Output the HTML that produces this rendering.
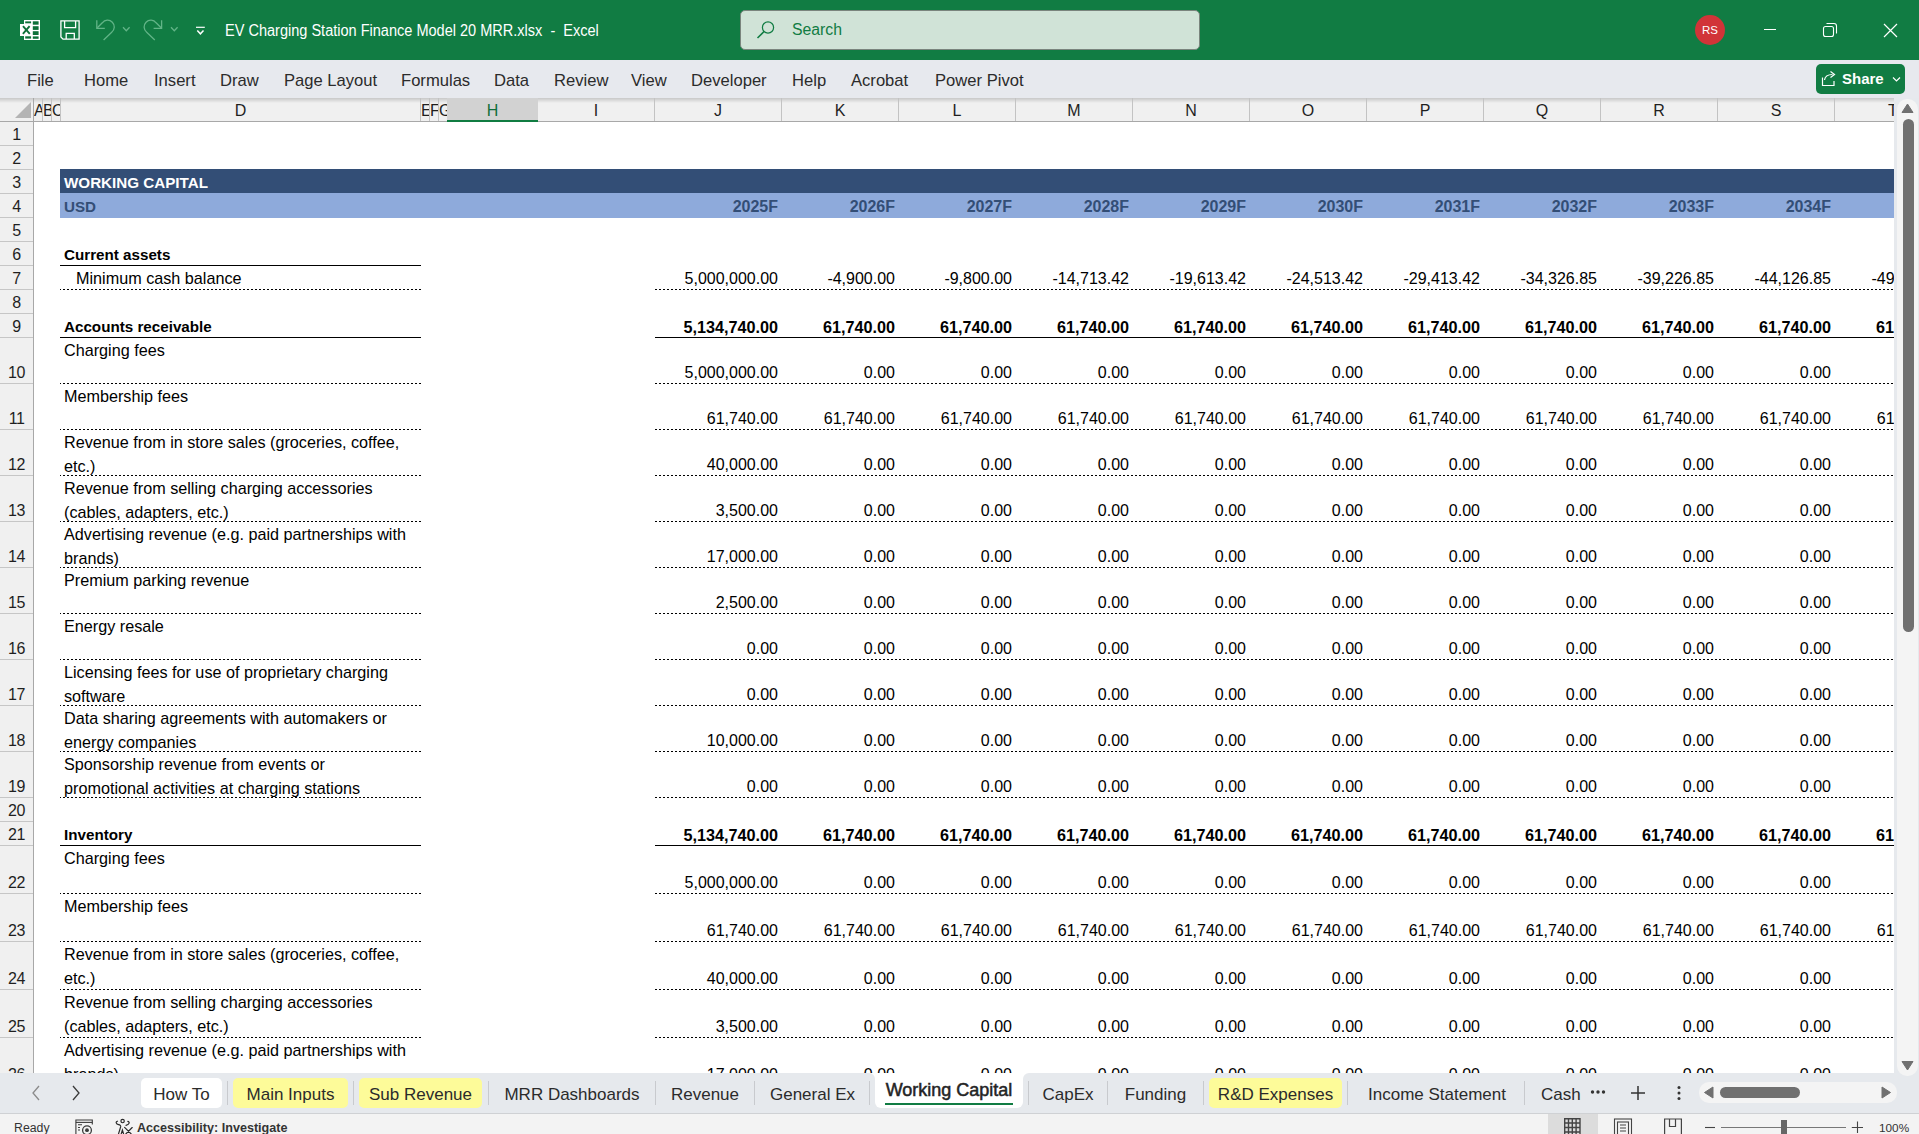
<!DOCTYPE html><html><head><meta charset="utf-8"><style>
*{margin:0;padding:0;box-sizing:border-box}
html,body{width:1919px;height:1134px;overflow:hidden;background:#fff;font-family:"Liberation Sans", sans-serif}
.a{position:absolute}
.t{position:absolute;white-space:nowrap;line-height:24px;height:24px}
.lab{font-size:16.2px;color:#000}
.labb{font-size:15.2px;font-weight:bold;color:#000}
.num{font-size:16px;color:#000;text-align:right}
.numb{font-size:16.2px;font-weight:bold;color:#000;text-align:right}
.dot{position:absolute;height:1px;background-image:linear-gradient(to right,#000 0,#000 2px,transparent 2px,transparent 4px);background-size:4px 1px}
.sol{position:absolute;height:1px;background:#000}
.rib{position:absolute;top:69px;line-height:24px;font-size:16.6px;color:#2b2b2b;white-space:nowrap}
.ch{position:absolute;top:99px;height:22px;line-height:23px;text-align:center;font-size:16px;color:#1f1f1f}
.rn{position:absolute;left:0;width:33px;text-align:center;font-size:16px;letter-spacing:-0.5px;color:#1f1f1f;line-height:20px}
.sep{position:absolute;width:1px;background:#c3c3c3}
.tab{position:absolute;top:1078px;height:30px;line-height:33px;font-size:17px;color:#2b2b2b;white-space:nowrap;border-radius:5px}
.tsep{position:absolute;top:1081px;width:1px;height:24px;background:#c8cace}
</style></head><body>
<div class="a" style="left:0;top:0;width:1919px;height:60px;background:#117C43"></div>
<svg class="a" style="left:14px;top:14px" width="32" height="32" viewBox="14 14 32 32">
<rect x="24" y="20" width="16" height="20" fill="#fff"/>
<g fill="#0d7038">
<rect x="25.2" y="21.4" width="5.9" height="1.9"/>
<rect x="32.8" y="21.3" width="5.8" height="3.4"/>
<rect x="32.8" y="26.2" width="5.8" height="3.7"/>
<rect x="32.8" y="31.2" width="5.8" height="3.8"/>
<rect x="32.8" y="36.4" width="5.8" height="2.4"/>
<rect x="25.2" y="36.3" width="5.9" height="2.3"/>
</g>
<rect x="20" y="24" width="11.5" height="12" fill="#fff"/>
<path d="M23 26.1 L29.8 33.8 M29.6 26.1 L22.9 33.8" stroke="#0d7038" stroke-width="1.9"/>
</svg>
<svg class="a" style="left:50px;top:10px" width="170" height="40" viewBox="50 10 170 40">
<path d="M60.9 20.9 H79.1 V39.1 H63 L60.9 37 Z" fill="none" stroke="#fff" stroke-width="1.3"/>
<path d="M64.6 20.9 V27.6 H75.6 V20.9" fill="none" stroke="#fff" stroke-width="1.3"/>
<path d="M66.2 39.1 V33.3 H74.3 V39.1" fill="none" stroke="#fff" stroke-width="1.3"/>
<g fill="none" stroke="#62b487" stroke-width="1.3">
<path d="M96.8 20.2 V28.3 H104.8"/>
<path d="M97.3 27.8 L102.3 22.8 A6.7 6.7 0 1 1 111.7 32.2 L103.6 40"/>
<path d="M123 27.3 L126.3 30.8 L129.6 27.3"/>
<path d="M161.6 20.2 V28.3 H153.6"/>
<path d="M161.1 27.8 L156.1 22.8 A6.7 6.7 0 1 0 146.7 32.2 L154.8 40"/>
<path d="M171 27.3 L174.3 30.8 L177.6 27.3"/>
</g>
<path d="M196 27.3 H204.8" stroke="#fff" stroke-width="1.2"/>
<path d="M197.3 30.6 L200.4 33.8 L203.5 30.6" fill="none" stroke="#fff" stroke-width="1.5"/>
</svg>
<div class="a" style="left:225px;top:20px;line-height:22px;font-size:16px;color:#fff;white-space:pre;transform:scaleX(0.908);transform-origin:0 0">EV Charging Station Finance Model 20 MRR.xlsx  -  Excel</div>
<div class="a" style="left:740px;top:10px;width:460px;height:40px;background:#d0e3d7;border:1px solid #7a857e;border-radius:5px"></div>
<svg class="a" style="left:756px;top:20px" width="20" height="20" viewBox="0 0 20 20">
<circle cx="12" cy="7.5" r="5.6" fill="none" stroke="#117C43" stroke-width="1.25"/>
<line x1="8" y1="11.5" x2="1.5" y2="18" stroke="#117C43" stroke-width="1.6"/>
</svg>
<div class="a" style="left:792px;top:18px;line-height:24px;font-size:15.8px;color:#117C43">Search</div>
<div class="a" style="left:1695px;top:15px;width:30px;height:30px;border-radius:15px;background:#d13438;color:#fff;font-size:11.5px;line-height:30px;text-align:center">RS</div>
<div class="a" style="left:1764px;top:29px;width:12px;height:1px;background:#fff"></div>
<svg class="a" style="left:1822px;top:22px" width="16" height="16" viewBox="0 0 16 16">
<rect x="1.5" y="4.5" width="10" height="10" rx="2" fill="none" stroke="#fff" stroke-width="1.1"/>
<path d="M4.5 1.5 H12 Q14.5 1.5 14.5 4 V11.5" fill="none" stroke="#fff" stroke-width="1.1"/>
</svg>
<svg class="a" style="left:1883px;top:23px" width="15" height="15" viewBox="0 0 15 15">
<path d="M1 1 L14 14 M14 1 L1 14" stroke="#fff" stroke-width="1.2"/>
</svg>
<div class="a" style="left:0;top:60px;width:1919px;height:38px;background:#e7e9ee"></div>
<div class="rib" style="left:27px">File</div>
<div class="rib" style="left:84px">Home</div>
<div class="rib" style="left:154px">Insert</div>
<div class="rib" style="left:220px">Draw</div>
<div class="rib" style="left:284px">Page Layout</div>
<div class="rib" style="left:401px">Formulas</div>
<div class="rib" style="left:494px">Data</div>
<div class="rib" style="left:554px">Review</div>
<div class="rib" style="left:631px">View</div>
<div class="rib" style="left:691px">Developer</div>
<div class="rib" style="left:792px">Help</div>
<div class="rib" style="left:851px">Acrobat</div>
<div class="rib" style="left:935px">Power Pivot</div>
<div class="a" style="left:1816px;top:64px;width:89px;height:30px;background:#117C43;border-radius:5px"></div>
<svg class="a" style="left:1821px;top:70px" width="16" height="17" viewBox="0 0 16 17">
<path d="M1.5 7.5 V15.5 H13 V11" fill="none" stroke="#fff" stroke-width="1.2"/>
<path d="M3.5 10 C4 6 7 4.5 11.5 4.5" fill="none" stroke="#fff" stroke-width="1.2"/>
<path d="M9.5 1.5 L13.5 4.5 L9.5 7.5" fill="none" stroke="#fff" stroke-width="1.2"/>
</svg>
<div class="a" style="left:1842px;top:67px;line-height:24px;font-size:15px;font-weight:bold;color:#fff">Share</div>
<svg class="a" style="left:1892px;top:76px" width="9" height="7" viewBox="0 0 9 7">
<path d="M1 1.5 L4.5 5 L8 1.5" fill="none" stroke="#fff" stroke-width="1.2"/>
</svg>
<div class="a" style="left:0;top:98px;width:1894px;height:24px;background:#f0f0f0"></div>
<div class="a" style="left:0;top:98px;width:1894px;height:5px;background:linear-gradient(#c8c8c8,#f0f0f0)"></div>
<svg class="a" style="left:14px;top:102px" width="17" height="17" viewBox="0 0 17 17"><path d="M17 0 V16 H1 Z" fill="#b4b4b4"/></svg>
<div class="sep" style="left:33px;top:98px;height:23px"></div>
<div class="sep" style="left:42px;top:98px;height:23px"></div>
<div class="sep" style="left:51px;top:98px;height:23px"></div>
<div class="sep" style="left:60px;top:98px;height:23px"></div>
<div class="sep" style="left:420px;top:98px;height:23px"></div>
<div class="sep" style="left:429px;top:98px;height:23px"></div>
<div class="sep" style="left:438px;top:98px;height:23px"></div>
<div class="sep" style="left:447px;top:98px;height:23px"></div>
<div class="sep" style="left:537px;top:98px;height:23px"></div>
<div class="sep" style="left:654px;top:98px;height:23px"></div>
<div class="sep" style="left:781px;top:98px;height:23px"></div>
<div class="sep" style="left:898px;top:98px;height:23px"></div>
<div class="sep" style="left:1015px;top:98px;height:23px"></div>
<div class="sep" style="left:1132px;top:98px;height:23px"></div>
<div class="sep" style="left:1249px;top:98px;height:23px"></div>
<div class="sep" style="left:1366px;top:98px;height:23px"></div>
<div class="sep" style="left:1483px;top:98px;height:23px"></div>
<div class="sep" style="left:1600px;top:98px;height:23px"></div>
<div class="sep" style="left:1717px;top:98px;height:23px"></div>
<div class="sep" style="left:1834px;top:98px;height:23px"></div>
<div class="a" style="left:33px;top:98px;width:1px;height:975px;background:#a8a8a8"></div>
<div class="a" style="left:0;top:121px;width:1894px;height:1px;background:#a8a8a8"></div>
<div class="a" style="left:447px;top:98px;width:91px;height:22px;background:#d2d2d2"></div>
<div class="a" style="left:447px;top:120px;width:91px;height:2px;background:#107c41"></div>
<div class="ch" style="left:34px;width:8px;text-align:left;overflow:hidden;color:#1f1f1f"><span style="position:relative;left:0px">A</span></div>
<div class="ch" style="left:43px;width:8px;text-align:left;overflow:hidden;color:#1f1f1f"><span style="position:relative;left:0px">B</span></div>
<div class="ch" style="left:52px;width:8px;text-align:left;overflow:hidden;color:#1f1f1f"><span style="position:relative;left:0px">C</span></div>
<div class="ch" style="left:61px;width:359px;color:#1f1f1f">D</div>
<div class="ch" style="left:421px;width:8px;text-align:left;overflow:hidden;color:#1f1f1f"><span style="position:relative;left:0px">E</span></div>
<div class="ch" style="left:430px;width:8px;text-align:left;overflow:hidden;color:#1f1f1f"><span style="position:relative;left:0px">F</span></div>
<div class="ch" style="left:439px;width:8px;text-align:left;overflow:hidden;color:#1f1f1f"><span style="position:relative;left:0px">G</span></div>
<div class="ch" style="left:448px;width:89px;color:#0e6e3a">H</div>
<div class="ch" style="left:538px;width:116px;color:#1f1f1f">I</div>
<div class="ch" style="left:655px;width:126px;color:#1f1f1f">J</div>
<div class="ch" style="left:782px;width:116px;color:#1f1f1f">K</div>
<div class="ch" style="left:899px;width:116px;color:#1f1f1f">L</div>
<div class="ch" style="left:1016px;width:116px;color:#1f1f1f">M</div>
<div class="ch" style="left:1133px;width:116px;color:#1f1f1f">N</div>
<div class="ch" style="left:1250px;width:116px;color:#1f1f1f">O</div>
<div class="ch" style="left:1367px;width:116px;color:#1f1f1f">P</div>
<div class="ch" style="left:1484px;width:116px;color:#1f1f1f">Q</div>
<div class="ch" style="left:1601px;width:116px;color:#1f1f1f">R</div>
<div class="ch" style="left:1718px;width:116px;color:#1f1f1f">S</div>
<div class="ch" style="left:1835px;width:116px;color:#1f1f1f">T</div>
<div class="a" style="left:0;top:122px;width:33px;height:951px;background:#f0f0f0"></div>
<div class="a" style="left:0;top:145px;width:33px;height:1px;background:#c6c6c6"></div>
<div class="rn" style="top:125px">1</div>
<div class="a" style="left:0;top:169px;width:33px;height:1px;background:#c6c6c6"></div>
<div class="rn" style="top:149px">2</div>
<div class="a" style="left:0;top:193px;width:33px;height:1px;background:#c6c6c6"></div>
<div class="rn" style="top:173px">3</div>
<div class="a" style="left:0;top:217px;width:33px;height:1px;background:#c6c6c6"></div>
<div class="rn" style="top:197px">4</div>
<div class="a" style="left:0;top:241px;width:33px;height:1px;background:#c6c6c6"></div>
<div class="rn" style="top:221px">5</div>
<div class="a" style="left:0;top:265px;width:33px;height:1px;background:#c6c6c6"></div>
<div class="rn" style="top:245px">6</div>
<div class="a" style="left:0;top:289px;width:33px;height:1px;background:#c6c6c6"></div>
<div class="rn" style="top:269px">7</div>
<div class="a" style="left:0;top:313px;width:33px;height:1px;background:#c6c6c6"></div>
<div class="rn" style="top:293px">8</div>
<div class="a" style="left:0;top:337px;width:33px;height:1px;background:#c6c6c6"></div>
<div class="rn" style="top:317px">9</div>
<div class="a" style="left:0;top:383px;width:33px;height:1px;background:#c6c6c6"></div>
<div class="rn" style="top:363px">10</div>
<div class="a" style="left:0;top:429px;width:33px;height:1px;background:#c6c6c6"></div>
<div class="rn" style="top:409px">11</div>
<div class="a" style="left:0;top:475px;width:33px;height:1px;background:#c6c6c6"></div>
<div class="rn" style="top:455px">12</div>
<div class="a" style="left:0;top:521px;width:33px;height:1px;background:#c6c6c6"></div>
<div class="rn" style="top:501px">13</div>
<div class="a" style="left:0;top:567px;width:33px;height:1px;background:#c6c6c6"></div>
<div class="rn" style="top:547px">14</div>
<div class="a" style="left:0;top:613px;width:33px;height:1px;background:#c6c6c6"></div>
<div class="rn" style="top:593px">15</div>
<div class="a" style="left:0;top:659px;width:33px;height:1px;background:#c6c6c6"></div>
<div class="rn" style="top:639px">16</div>
<div class="a" style="left:0;top:705px;width:33px;height:1px;background:#c6c6c6"></div>
<div class="rn" style="top:685px">17</div>
<div class="a" style="left:0;top:751px;width:33px;height:1px;background:#c6c6c6"></div>
<div class="rn" style="top:731px">18</div>
<div class="a" style="left:0;top:797px;width:33px;height:1px;background:#c6c6c6"></div>
<div class="rn" style="top:777px">19</div>
<div class="a" style="left:0;top:821px;width:33px;height:1px;background:#c6c6c6"></div>
<div class="rn" style="top:801px">20</div>
<div class="a" style="left:0;top:845px;width:33px;height:1px;background:#c6c6c6"></div>
<div class="rn" style="top:825px">21</div>
<div class="a" style="left:0;top:893px;width:33px;height:1px;background:#c6c6c6"></div>
<div class="rn" style="top:873px">22</div>
<div class="a" style="left:0;top:941px;width:33px;height:1px;background:#c6c6c6"></div>
<div class="rn" style="top:921px">23</div>
<div class="a" style="left:0;top:989px;width:33px;height:1px;background:#c6c6c6"></div>
<div class="rn" style="top:969px">24</div>
<div class="a" style="left:0;top:1037px;width:33px;height:1px;background:#c6c6c6"></div>
<div class="rn" style="top:1017px">25</div>
<div class="rn" style="top:1065px">26</div>
<div class="a" style="left:34px;top:122px;width:1860px;height:951px;overflow:hidden">
<div class="a" style="left:26px;top:47px;width:1834px;height:24px;background:#334e76"></div>
<div class="a" style="left:26px;top:71px;width:1834px;height:25px;background:#8eaadb"></div>
<div class="t labb" style="left:30px;top:49px;color:#fff">WORKING CAPITAL</div>
<div class="t labb" style="left:30px;top:73px;color:#334e76">USD</div>
<div class="t numb" style="left:621px;width:123px;top:73px;color:#334e76;font-size:16px">2025F</div>
<div class="t numb" style="left:748px;width:113px;top:73px;color:#334e76;font-size:16px">2026F</div>
<div class="t numb" style="left:865px;width:113px;top:73px;color:#334e76;font-size:16px">2027F</div>
<div class="t numb" style="left:982px;width:113px;top:73px;color:#334e76;font-size:16px">2028F</div>
<div class="t numb" style="left:1099px;width:113px;top:73px;color:#334e76;font-size:16px">2029F</div>
<div class="t numb" style="left:1216px;width:113px;top:73px;color:#334e76;font-size:16px">2030F</div>
<div class="t numb" style="left:1333px;width:113px;top:73px;color:#334e76;font-size:16px">2031F</div>
<div class="t numb" style="left:1450px;width:113px;top:73px;color:#334e76;font-size:16px">2032F</div>
<div class="t numb" style="left:1567px;width:113px;top:73px;color:#334e76;font-size:16px">2033F</div>
<div class="t numb" style="left:1684px;width:113px;top:73px;color:#334e76;font-size:16px">2034F</div>
<div class="t numb" style="left:1801px;width:113px;top:73px;color:#334e76;font-size:16px">2035F</div>
<div class="t labb" style="left:30px;top:121px">Current assets</div>
<div class="sol" style="left:26px;top:143px;width:361px;background-position:3px 0"></div>
<div class="t lab" style="left:42px;top:144px">Minimum cash balance</div>
<div class="t num" style="left:621px;width:123px;top:145px">5,000,000.00</div>
<div class="t num" style="left:748px;width:113px;top:145px">-4,900.00</div>
<div class="t num" style="left:865px;width:113px;top:145px">-9,800.00</div>
<div class="t num" style="left:982px;width:113px;top:145px">-14,713.42</div>
<div class="t num" style="left:1099px;width:113px;top:145px">-19,613.42</div>
<div class="t num" style="left:1216px;width:113px;top:145px">-24,513.42</div>
<div class="t num" style="left:1333px;width:113px;top:145px">-29,413.42</div>
<div class="t num" style="left:1450px;width:113px;top:145px">-34,326.85</div>
<div class="t num" style="left:1567px;width:113px;top:145px">-39,226.85</div>
<div class="t num" style="left:1684px;width:113px;top:145px">-44,126.85</div>
<div class="t num" style="left:1801px;width:113px;top:145px">-49,026.85</div>
<div class="dot" style="left:26px;top:167px;width:361px;background-position:3px 0"></div>
<div class="dot" style="left:621px;top:167px;width:1239px"></div>
<div class="t labb" style="left:30px;top:193px">Accounts receivable</div>
<div class="t numb" style="left:621px;width:123px;top:193px">5,134,740.00</div>
<div class="t numb" style="left:748px;width:113px;top:193px">61,740.00</div>
<div class="t numb" style="left:865px;width:113px;top:193px">61,740.00</div>
<div class="t numb" style="left:982px;width:113px;top:193px">61,740.00</div>
<div class="t numb" style="left:1099px;width:113px;top:193px">61,740.00</div>
<div class="t numb" style="left:1216px;width:113px;top:193px">61,740.00</div>
<div class="t numb" style="left:1333px;width:113px;top:193px">61,740.00</div>
<div class="t numb" style="left:1450px;width:113px;top:193px">61,740.00</div>
<div class="t numb" style="left:1567px;width:113px;top:193px">61,740.00</div>
<div class="t numb" style="left:1684px;width:113px;top:193px">61,740.00</div>
<div class="t numb" style="left:1801px;width:113px;top:193px">61,740.00</div>
<div class="sol" style="left:26px;top:215px;width:361px;background-position:3px 0"></div>
<div class="sol" style="left:621px;top:215px;width:1239px"></div>
<div class="t lab" style="left:30px;top:216px">Charging fees</div>
<div class="t num" style="left:621px;width:123px;top:239px">5,000,000.00</div>
<div class="t num" style="left:748px;width:113px;top:239px">0.00</div>
<div class="t num" style="left:865px;width:113px;top:239px">0.00</div>
<div class="t num" style="left:982px;width:113px;top:239px">0.00</div>
<div class="t num" style="left:1099px;width:113px;top:239px">0.00</div>
<div class="t num" style="left:1216px;width:113px;top:239px">0.00</div>
<div class="t num" style="left:1333px;width:113px;top:239px">0.00</div>
<div class="t num" style="left:1450px;width:113px;top:239px">0.00</div>
<div class="t num" style="left:1567px;width:113px;top:239px">0.00</div>
<div class="t num" style="left:1684px;width:113px;top:239px">0.00</div>
<div class="t num" style="left:1801px;width:113px;top:239px">0.00</div>
<div class="dot" style="left:26px;top:261px;width:361px;background-position:3px 0"></div>
<div class="dot" style="left:621px;top:261px;width:1239px"></div>
<div class="t lab" style="left:30px;top:262px">Membership fees</div>
<div class="t num" style="left:621px;width:123px;top:285px">61,740.00</div>
<div class="t num" style="left:748px;width:113px;top:285px">61,740.00</div>
<div class="t num" style="left:865px;width:113px;top:285px">61,740.00</div>
<div class="t num" style="left:982px;width:113px;top:285px">61,740.00</div>
<div class="t num" style="left:1099px;width:113px;top:285px">61,740.00</div>
<div class="t num" style="left:1216px;width:113px;top:285px">61,740.00</div>
<div class="t num" style="left:1333px;width:113px;top:285px">61,740.00</div>
<div class="t num" style="left:1450px;width:113px;top:285px">61,740.00</div>
<div class="t num" style="left:1567px;width:113px;top:285px">61,740.00</div>
<div class="t num" style="left:1684px;width:113px;top:285px">61,740.00</div>
<div class="t num" style="left:1801px;width:113px;top:285px">61,740.00</div>
<div class="dot" style="left:26px;top:307px;width:361px;background-position:3px 0"></div>
<div class="dot" style="left:621px;top:307px;width:1239px"></div>
<div class="t lab" style="left:30px;top:308px">Revenue from in store sales (groceries, coffee,</div>
<div class="t lab" style="left:30px;top:332px">etc.)</div>
<div class="t num" style="left:621px;width:123px;top:331px">40,000.00</div>
<div class="t num" style="left:748px;width:113px;top:331px">0.00</div>
<div class="t num" style="left:865px;width:113px;top:331px">0.00</div>
<div class="t num" style="left:982px;width:113px;top:331px">0.00</div>
<div class="t num" style="left:1099px;width:113px;top:331px">0.00</div>
<div class="t num" style="left:1216px;width:113px;top:331px">0.00</div>
<div class="t num" style="left:1333px;width:113px;top:331px">0.00</div>
<div class="t num" style="left:1450px;width:113px;top:331px">0.00</div>
<div class="t num" style="left:1567px;width:113px;top:331px">0.00</div>
<div class="t num" style="left:1684px;width:113px;top:331px">0.00</div>
<div class="t num" style="left:1801px;width:113px;top:331px">0.00</div>
<div class="dot" style="left:26px;top:353px;width:361px;background-position:3px 0"></div>
<div class="dot" style="left:621px;top:353px;width:1239px"></div>
<div class="t lab" style="left:30px;top:354px">Revenue from selling charging accessories</div>
<div class="t lab" style="left:30px;top:378px">(cables, adapters, etc.)</div>
<div class="t num" style="left:621px;width:123px;top:377px">3,500.00</div>
<div class="t num" style="left:748px;width:113px;top:377px">0.00</div>
<div class="t num" style="left:865px;width:113px;top:377px">0.00</div>
<div class="t num" style="left:982px;width:113px;top:377px">0.00</div>
<div class="t num" style="left:1099px;width:113px;top:377px">0.00</div>
<div class="t num" style="left:1216px;width:113px;top:377px">0.00</div>
<div class="t num" style="left:1333px;width:113px;top:377px">0.00</div>
<div class="t num" style="left:1450px;width:113px;top:377px">0.00</div>
<div class="t num" style="left:1567px;width:113px;top:377px">0.00</div>
<div class="t num" style="left:1684px;width:113px;top:377px">0.00</div>
<div class="t num" style="left:1801px;width:113px;top:377px">0.00</div>
<div class="dot" style="left:26px;top:399px;width:361px;background-position:3px 0"></div>
<div class="dot" style="left:621px;top:399px;width:1239px"></div>
<div class="t lab" style="left:30px;top:400px">Advertising revenue (e.g. paid partnerships with</div>
<div class="t lab" style="left:30px;top:424px">brands)</div>
<div class="t num" style="left:621px;width:123px;top:423px">17,000.00</div>
<div class="t num" style="left:748px;width:113px;top:423px">0.00</div>
<div class="t num" style="left:865px;width:113px;top:423px">0.00</div>
<div class="t num" style="left:982px;width:113px;top:423px">0.00</div>
<div class="t num" style="left:1099px;width:113px;top:423px">0.00</div>
<div class="t num" style="left:1216px;width:113px;top:423px">0.00</div>
<div class="t num" style="left:1333px;width:113px;top:423px">0.00</div>
<div class="t num" style="left:1450px;width:113px;top:423px">0.00</div>
<div class="t num" style="left:1567px;width:113px;top:423px">0.00</div>
<div class="t num" style="left:1684px;width:113px;top:423px">0.00</div>
<div class="t num" style="left:1801px;width:113px;top:423px">0.00</div>
<div class="dot" style="left:26px;top:445px;width:361px;background-position:3px 0"></div>
<div class="dot" style="left:621px;top:445px;width:1239px"></div>
<div class="t lab" style="left:30px;top:446px">Premium parking revenue</div>
<div class="t num" style="left:621px;width:123px;top:469px">2,500.00</div>
<div class="t num" style="left:748px;width:113px;top:469px">0.00</div>
<div class="t num" style="left:865px;width:113px;top:469px">0.00</div>
<div class="t num" style="left:982px;width:113px;top:469px">0.00</div>
<div class="t num" style="left:1099px;width:113px;top:469px">0.00</div>
<div class="t num" style="left:1216px;width:113px;top:469px">0.00</div>
<div class="t num" style="left:1333px;width:113px;top:469px">0.00</div>
<div class="t num" style="left:1450px;width:113px;top:469px">0.00</div>
<div class="t num" style="left:1567px;width:113px;top:469px">0.00</div>
<div class="t num" style="left:1684px;width:113px;top:469px">0.00</div>
<div class="t num" style="left:1801px;width:113px;top:469px">0.00</div>
<div class="dot" style="left:26px;top:491px;width:361px;background-position:3px 0"></div>
<div class="dot" style="left:621px;top:491px;width:1239px"></div>
<div class="t lab" style="left:30px;top:492px">Energy resale</div>
<div class="t num" style="left:621px;width:123px;top:515px">0.00</div>
<div class="t num" style="left:748px;width:113px;top:515px">0.00</div>
<div class="t num" style="left:865px;width:113px;top:515px">0.00</div>
<div class="t num" style="left:982px;width:113px;top:515px">0.00</div>
<div class="t num" style="left:1099px;width:113px;top:515px">0.00</div>
<div class="t num" style="left:1216px;width:113px;top:515px">0.00</div>
<div class="t num" style="left:1333px;width:113px;top:515px">0.00</div>
<div class="t num" style="left:1450px;width:113px;top:515px">0.00</div>
<div class="t num" style="left:1567px;width:113px;top:515px">0.00</div>
<div class="t num" style="left:1684px;width:113px;top:515px">0.00</div>
<div class="t num" style="left:1801px;width:113px;top:515px">0.00</div>
<div class="dot" style="left:26px;top:537px;width:361px;background-position:3px 0"></div>
<div class="dot" style="left:621px;top:537px;width:1239px"></div>
<div class="t lab" style="left:30px;top:538px">Licensing fees for use of proprietary charging</div>
<div class="t lab" style="left:30px;top:562px">software</div>
<div class="t num" style="left:621px;width:123px;top:561px">0.00</div>
<div class="t num" style="left:748px;width:113px;top:561px">0.00</div>
<div class="t num" style="left:865px;width:113px;top:561px">0.00</div>
<div class="t num" style="left:982px;width:113px;top:561px">0.00</div>
<div class="t num" style="left:1099px;width:113px;top:561px">0.00</div>
<div class="t num" style="left:1216px;width:113px;top:561px">0.00</div>
<div class="t num" style="left:1333px;width:113px;top:561px">0.00</div>
<div class="t num" style="left:1450px;width:113px;top:561px">0.00</div>
<div class="t num" style="left:1567px;width:113px;top:561px">0.00</div>
<div class="t num" style="left:1684px;width:113px;top:561px">0.00</div>
<div class="t num" style="left:1801px;width:113px;top:561px">0.00</div>
<div class="dot" style="left:26px;top:583px;width:361px;background-position:3px 0"></div>
<div class="dot" style="left:621px;top:583px;width:1239px"></div>
<div class="t lab" style="left:30px;top:584px">Data sharing agreements with automakers or</div>
<div class="t lab" style="left:30px;top:608px">energy companies</div>
<div class="t num" style="left:621px;width:123px;top:607px">10,000.00</div>
<div class="t num" style="left:748px;width:113px;top:607px">0.00</div>
<div class="t num" style="left:865px;width:113px;top:607px">0.00</div>
<div class="t num" style="left:982px;width:113px;top:607px">0.00</div>
<div class="t num" style="left:1099px;width:113px;top:607px">0.00</div>
<div class="t num" style="left:1216px;width:113px;top:607px">0.00</div>
<div class="t num" style="left:1333px;width:113px;top:607px">0.00</div>
<div class="t num" style="left:1450px;width:113px;top:607px">0.00</div>
<div class="t num" style="left:1567px;width:113px;top:607px">0.00</div>
<div class="t num" style="left:1684px;width:113px;top:607px">0.00</div>
<div class="t num" style="left:1801px;width:113px;top:607px">0.00</div>
<div class="dot" style="left:26px;top:629px;width:361px;background-position:3px 0"></div>
<div class="dot" style="left:621px;top:629px;width:1239px"></div>
<div class="t lab" style="left:30px;top:630px">Sponsorship revenue from events or</div>
<div class="t lab" style="left:30px;top:654px">promotional activities at charging stations</div>
<div class="t num" style="left:621px;width:123px;top:653px">0.00</div>
<div class="t num" style="left:748px;width:113px;top:653px">0.00</div>
<div class="t num" style="left:865px;width:113px;top:653px">0.00</div>
<div class="t num" style="left:982px;width:113px;top:653px">0.00</div>
<div class="t num" style="left:1099px;width:113px;top:653px">0.00</div>
<div class="t num" style="left:1216px;width:113px;top:653px">0.00</div>
<div class="t num" style="left:1333px;width:113px;top:653px">0.00</div>
<div class="t num" style="left:1450px;width:113px;top:653px">0.00</div>
<div class="t num" style="left:1567px;width:113px;top:653px">0.00</div>
<div class="t num" style="left:1684px;width:113px;top:653px">0.00</div>
<div class="t num" style="left:1801px;width:113px;top:653px">0.00</div>
<div class="dot" style="left:26px;top:675px;width:361px;background-position:3px 0"></div>
<div class="dot" style="left:621px;top:675px;width:1239px"></div>
<div class="t labb" style="left:30px;top:701px">Inventory</div>
<div class="t numb" style="left:621px;width:123px;top:701px">5,134,740.00</div>
<div class="t numb" style="left:748px;width:113px;top:701px">61,740.00</div>
<div class="t numb" style="left:865px;width:113px;top:701px">61,740.00</div>
<div class="t numb" style="left:982px;width:113px;top:701px">61,740.00</div>
<div class="t numb" style="left:1099px;width:113px;top:701px">61,740.00</div>
<div class="t numb" style="left:1216px;width:113px;top:701px">61,740.00</div>
<div class="t numb" style="left:1333px;width:113px;top:701px">61,740.00</div>
<div class="t numb" style="left:1450px;width:113px;top:701px">61,740.00</div>
<div class="t numb" style="left:1567px;width:113px;top:701px">61,740.00</div>
<div class="t numb" style="left:1684px;width:113px;top:701px">61,740.00</div>
<div class="t numb" style="left:1801px;width:113px;top:701px">61,740.00</div>
<div class="sol" style="left:26px;top:723px;width:361px;background-position:3px 0"></div>
<div class="sol" style="left:621px;top:723px;width:1239px"></div>
<div class="t lab" style="left:30px;top:724px">Charging fees</div>
<div class="t num" style="left:621px;width:123px;top:749px">5,000,000.00</div>
<div class="t num" style="left:748px;width:113px;top:749px">0.00</div>
<div class="t num" style="left:865px;width:113px;top:749px">0.00</div>
<div class="t num" style="left:982px;width:113px;top:749px">0.00</div>
<div class="t num" style="left:1099px;width:113px;top:749px">0.00</div>
<div class="t num" style="left:1216px;width:113px;top:749px">0.00</div>
<div class="t num" style="left:1333px;width:113px;top:749px">0.00</div>
<div class="t num" style="left:1450px;width:113px;top:749px">0.00</div>
<div class="t num" style="left:1567px;width:113px;top:749px">0.00</div>
<div class="t num" style="left:1684px;width:113px;top:749px">0.00</div>
<div class="t num" style="left:1801px;width:113px;top:749px">0.00</div>
<div class="dot" style="left:26px;top:771px;width:361px;background-position:3px 0"></div>
<div class="dot" style="left:621px;top:771px;width:1239px"></div>
<div class="t lab" style="left:30px;top:772px">Membership fees</div>
<div class="t num" style="left:621px;width:123px;top:797px">61,740.00</div>
<div class="t num" style="left:748px;width:113px;top:797px">61,740.00</div>
<div class="t num" style="left:865px;width:113px;top:797px">61,740.00</div>
<div class="t num" style="left:982px;width:113px;top:797px">61,740.00</div>
<div class="t num" style="left:1099px;width:113px;top:797px">61,740.00</div>
<div class="t num" style="left:1216px;width:113px;top:797px">61,740.00</div>
<div class="t num" style="left:1333px;width:113px;top:797px">61,740.00</div>
<div class="t num" style="left:1450px;width:113px;top:797px">61,740.00</div>
<div class="t num" style="left:1567px;width:113px;top:797px">61,740.00</div>
<div class="t num" style="left:1684px;width:113px;top:797px">61,740.00</div>
<div class="t num" style="left:1801px;width:113px;top:797px">61,740.00</div>
<div class="dot" style="left:26px;top:819px;width:361px;background-position:3px 0"></div>
<div class="dot" style="left:621px;top:819px;width:1239px"></div>
<div class="t lab" style="left:30px;top:820px">Revenue from in store sales (groceries, coffee,</div>
<div class="t lab" style="left:30px;top:844px">etc.)</div>
<div class="t num" style="left:621px;width:123px;top:845px">40,000.00</div>
<div class="t num" style="left:748px;width:113px;top:845px">0.00</div>
<div class="t num" style="left:865px;width:113px;top:845px">0.00</div>
<div class="t num" style="left:982px;width:113px;top:845px">0.00</div>
<div class="t num" style="left:1099px;width:113px;top:845px">0.00</div>
<div class="t num" style="left:1216px;width:113px;top:845px">0.00</div>
<div class="t num" style="left:1333px;width:113px;top:845px">0.00</div>
<div class="t num" style="left:1450px;width:113px;top:845px">0.00</div>
<div class="t num" style="left:1567px;width:113px;top:845px">0.00</div>
<div class="t num" style="left:1684px;width:113px;top:845px">0.00</div>
<div class="t num" style="left:1801px;width:113px;top:845px">0.00</div>
<div class="dot" style="left:26px;top:867px;width:361px;background-position:3px 0"></div>
<div class="dot" style="left:621px;top:867px;width:1239px"></div>
<div class="t lab" style="left:30px;top:868px">Revenue from selling charging accessories</div>
<div class="t lab" style="left:30px;top:892px">(cables, adapters, etc.)</div>
<div class="t num" style="left:621px;width:123px;top:893px">3,500.00</div>
<div class="t num" style="left:748px;width:113px;top:893px">0.00</div>
<div class="t num" style="left:865px;width:113px;top:893px">0.00</div>
<div class="t num" style="left:982px;width:113px;top:893px">0.00</div>
<div class="t num" style="left:1099px;width:113px;top:893px">0.00</div>
<div class="t num" style="left:1216px;width:113px;top:893px">0.00</div>
<div class="t num" style="left:1333px;width:113px;top:893px">0.00</div>
<div class="t num" style="left:1450px;width:113px;top:893px">0.00</div>
<div class="t num" style="left:1567px;width:113px;top:893px">0.00</div>
<div class="t num" style="left:1684px;width:113px;top:893px">0.00</div>
<div class="t num" style="left:1801px;width:113px;top:893px">0.00</div>
<div class="dot" style="left:26px;top:915px;width:361px;background-position:3px 0"></div>
<div class="dot" style="left:621px;top:915px;width:1239px"></div>
<div class="t lab" style="left:30px;top:916px">Advertising revenue (e.g. paid partnerships with</div>
<div class="t lab" style="left:30px;top:940px">brands)</div>
<div class="t num" style="left:621px;width:123px;top:941px">17,000.00</div>
<div class="t num" style="left:748px;width:113px;top:941px">0.00</div>
<div class="t num" style="left:865px;width:113px;top:941px">0.00</div>
<div class="t num" style="left:982px;width:113px;top:941px">0.00</div>
<div class="t num" style="left:1099px;width:113px;top:941px">0.00</div>
<div class="t num" style="left:1216px;width:113px;top:941px">0.00</div>
<div class="t num" style="left:1333px;width:113px;top:941px">0.00</div>
<div class="t num" style="left:1450px;width:113px;top:941px">0.00</div>
<div class="t num" style="left:1567px;width:113px;top:941px">0.00</div>
<div class="t num" style="left:1684px;width:113px;top:941px">0.00</div>
<div class="t num" style="left:1801px;width:113px;top:941px">0.00</div>
<div class="dot" style="left:26px;top:963px;width:361px;background-position:3px 0"></div>
<div class="dot" style="left:621px;top:963px;width:1239px"></div>
</div>
<div class="a" style="left:1894px;top:98px;width:25px;height:977px;background:#e6e9ed"></div>
<div class="a" style="left:1897px;top:99px;width:21px;height:977px;background:#f4f4f4;border-radius:10px;z-index:3"></div>
<svg class="a" style="left:1901px;top:103px;z-index:4" width="13" height="11" viewBox="0 0 13 11"><path d="M6.5 1 L12 9.5 H1 Z" fill="#707070" stroke="#707070" stroke-linejoin="round"/></svg>
<div class="a" style="z-index:4;left:1903px;top:119px;width:11px;height:513px;background:#707070;border-radius:5.5px"></div>
<svg class="a" style="left:1901px;top:1060px;z-index:4" width="13" height="11" viewBox="0 0 13 11"><path d="M1 1.5 H12 L6.5 10 Z" fill="#707070" stroke="#707070" stroke-linejoin="round"/></svg>
<div class="a" style="left:0;top:1073px;width:1919px;height:40px;background:#e6e9ed"></div>
<svg class="a" style="left:31px;top:1085px" width="10" height="16" viewBox="0 0 10 16"><path d="M8 1 L2 8 L8 15" fill="none" stroke="#8a8a8a" stroke-width="1.3"/></svg>
<svg class="a" style="left:71px;top:1085px" width="10" height="16" viewBox="0 0 10 16"><path d="M2 1 L8 8 L2 15" fill="none" stroke="#3a3a3a" stroke-width="1.3"/></svg>
<div class="tab" style="left:141px;width:81px;text-align:center;background:#ffffff;">How To</div>
<div class="tab" style="left:233px;width:115px;text-align:center;background:#fdfb99;">Main Inputs</div>
<div class="tab" style="left:359px;width:123px;text-align:center;background:#fdfb99;">Sub Revenue</div>
<div class="tab" style="left:494px;width:156px;text-align:center;">MRR Dashboards</div>
<div class="tab" style="left:661px;width:88px;text-align:center;">Revenue</div>
<div class="tab" style="left:760px;width:105px;text-align:center;">General Ex</div>
<div class="tab" style="left:1033px;width:70px;text-align:center;">CapEx</div>
<div class="tab" style="left:1113px;width:85px;text-align:center;">Funding</div>
<div class="tab" style="left:1209px;width:133px;text-align:center;background:#fdfb99;">R&amp;D Expenses</div>
<div class="tab" style="left:1354px;width:166px;text-align:center;">Income Statement</div>
<div class="tsep" style="left:227px"></div>
<div class="tsep" style="left:353px"></div>
<div class="tsep" style="left:488px"></div>
<div class="tsep" style="left:655px"></div>
<div class="tsep" style="left:754px"></div>
<div class="tsep" style="left:869px"></div>
<div class="tsep" style="left:1028px"></div>
<div class="tsep" style="left:1107px"></div>
<div class="tsep" style="left:1203px"></div>
<div class="tsep" style="left:1347px"></div>
<div class="tsep" style="left:1524px"></div>
<div class="a" style="left:869px;top:1073px;width:160px;height:8px;background:#fff"></div>
<div class="a" style="left:865px;top:1073px;width:10px;height:8px;background:#e6e9ed;border-radius:0 6px 0 0"></div>
<div class="a" style="left:1023px;top:1073px;width:10px;height:8px;background:#e6e9ed;border-radius:6px 0 0 0"></div>
<div class="a" style="left:875px;top:1073px;width:148px;height:35px;background:#fff;border-radius:0 0 6px 6px"></div>
<div class="a" style="left:875px;top:1077px;width:148px;line-height:26px;text-align:center;font-size:18px;-webkit-text-stroke:0.5px #242424;color:#242424">Working Capital</div>
<div class="a" style="left:885px;top:1103px;width:128px;height:2px;background:#117C43"></div>
<div class="tab" style="left:1541px">Cash</div>
<svg class="a" style="left:1590px;top:1089px" width="16" height="6" viewBox="0 0 16 6"><circle cx="2.5" cy="3" r="1.7" fill="#333"/><circle cx="8" cy="3" r="1.7" fill="#333"/><circle cx="13.5" cy="3" r="1.7" fill="#333"/></svg>
<svg class="a" style="left:1630px;top:1085px" width="16" height="16" viewBox="0 0 16 16"><path d="M8 1 V15 M1 8 H15" stroke="#333" stroke-width="1.5"/></svg>
<svg class="a" style="left:1676px;top:1085px" width="6" height="16" viewBox="0 0 6 16"><circle cx="3" cy="2.5" r="1.5" fill="#333"/><circle cx="3" cy="8" r="1.5" fill="#333"/><circle cx="3" cy="13.5" r="1.5" fill="#333"/></svg>
<div class="a" style="left:1699px;top:1082px;width:198px;height:21px;background:#f4f4f4;border-radius:10px"></div>
<svg class="a" style="left:1703px;top:1086px" width="12" height="13" viewBox="0 0 12 13"><path d="M1.5 6.5 L10 1 V12 Z" fill="#707070" stroke="#707070" stroke-linejoin="round"/></svg>
<div class="a" style="left:1720px;top:1087px;width:80px;height:11px;background:#707070;border-radius:5.5px"></div>
<svg class="a" style="left:1880px;top:1086px" width="12" height="13" viewBox="0 0 12 13"><path d="M10.5 6.5 L2 1 V12 Z" fill="#707070" stroke="#707070" stroke-linejoin="round"/></svg>
<div class="a" style="left:0;top:1113px;width:1919px;height:21px;background:#f3f3f3;border-top:1px solid #cfd1d4"></div>
<div class="a" style="left:14px;top:1119px;line-height:18px;font-size:12.3px;color:#333">Ready</div>
<svg class="a" style="left:70px;top:1114px" width="66" height="20" viewBox="70 1114 66 20">
<g fill="none" stroke="#3a3a3a" stroke-width="1.1">
<path d="M75.9 1134 V1120 H92.3 V1124.5"/>
<path d="M75.9 1122.4 H92.3"/>
<path d="M78 1124.8 H82 M78 1127.5 H80 M78 1130 H80"/>
<circle cx="87" cy="1130.2" r="4.4" stroke-width="1.3"/>
</g>
<circle cx="87" cy="1130.2" r="1.9" fill="#3a3a3a"/>
<g fill="none" stroke="#2a2a2a" stroke-width="1.15" stroke-linecap="round">
<circle cx="122.6" cy="1121" r="1.7"/>
<path d="M117.5 1121.2 C115.4 1121.6 115.8 1124.2 118.6 1124.6 C120 1124.8 121 1125.5 120.6 1127 L118.5 1134"/>
<path d="M127.8 1121.4 C130 1121.8 129.8 1124.4 126 1125.4"/>
<path d="M121.2 1134 L122.4 1130 L123.6 1134"/>
<path d="M124.6 1127.3 L131.2 1134 M132.2 1127.5 L125.8 1134"/>
</g>
</svg>
<div class="a" style="left:137px;top:1119px;line-height:18px;font-size:12.6px;font-weight:bold;color:#333">Accessibility: Investigate</div>
<div class="a" style="left:1548px;top:1114px;width:50px;height:20px;background:#dcdcdc"></div>
<svg class="a" style="left:1540px;top:1113px" width="340" height="21" viewBox="1540 1113 340 21">
<g fill="none" stroke="#444" stroke-width="1.4">
<path d="M1564.7 1118.7 H1580 V1136 H1564.7 Z M1564.7 1123 H1580 M1564.7 1127.5 H1580 M1564.7 1132 H1580 M1568.5 1118.7 V1136 M1572.3 1118.7 V1136 M1576.1 1118.7 V1136"/>
</g>
<g fill="none" stroke="#444" stroke-width="1.1">
<rect x="1614.5" y="1119" width="17" height="16"/>
<rect x="1617.5" y="1122" width="11" height="13"/>
<path d="M1620 1125 H1626 M1620 1128 H1626 M1620 1131 H1626"/>
</g>
<path d="M1664.6 1136 V1119 H1681.4 V1136 M1669.5 1119 V1126.5 H1675.5 V1119" fill="none" stroke="#444" stroke-width="1.2"/>
<path d="M1705 1127.5 H1715" stroke="#444" stroke-width="1.1"/>
<path d="M1721 1127.5 H1846" stroke="#777" stroke-width="1"/>
<rect x="1781" y="1120" width="6" height="14" fill="#666"/>
<path d="M1857.5 1121.5 V1133 M1851.8 1127.5 H1863" stroke="#444" stroke-width="1.1"/>
</svg>
<div class="a" style="left:1879px;top:1119px;line-height:18px;font-size:11.8px;color:#333">100%</div>
</body></html>
